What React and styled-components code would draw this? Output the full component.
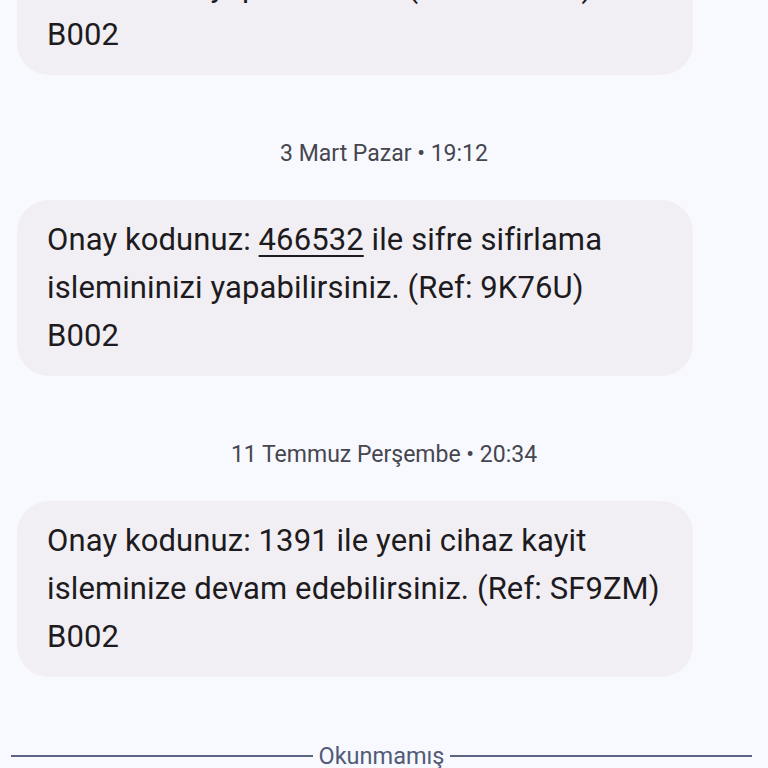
import React from 'react';
import styled, { createGlobalStyle } from 'styled-components';

const GlobalStyle = createGlobalStyle`
  html, body {
    margin: 0;
    padding: 0;
    background: #f8f9fe;
  }
  body {
    font-family: Roboto, "Noto Sans", sans-serif;
    overflow: hidden;
  }
`

const Screen = styled.div`
  width: 768px;
  height: 768px;
  overflow: hidden;
  background: #f8f9fe;
`

const Thread = styled.div`
  display: flex;
  flex-direction: column;
  margin-top: -101px;
`

const Bubble = styled.div`
  box-sizing: border-box;
  width: 676px;
  margin-left: 17px;
  padding: 16px 30px;
  background: #f1eff4;
  border-radius: 32px;
  color: #1d1b20;
  font-size: 31px;
  line-height: 48px;
  letter-spacing: 0.1px;
`

const Code = styled.span`
  text-decoration: underline;
  text-decoration-thickness: 2px;
  text-underline-offset: 5px;
`

const DateLabel = styled.div`
  margin: 65px 0 32px;
  text-align: center;
  font-size: 23px;
  line-height: 28px;
  color: #46464f;
`

const Divider = styled.div`
  display: flex;
  align-items: center;
  gap: 6px;
  margin: 65px 16px 0 11px;
  font-size: 23.5px;
  line-height: 28px;
  color: #515b78;
  &::before, &::after {
    content: '';
    flex: 1;
    height: 2px;
    background: #5b6482;
  }
`

const messages = [
  {
    date: null,
    lines: [
      <>Onay kodunuz: <Code>281947</Code> ile sifre sifirlama</>,
      'islemininizi yapabilirsiniz. (Ref: 4XM8K)',
      'B002',
    ],
  },
  {
    date: '3 Mart Pazar • 19:12',
    lines: [
      <>Onay kodunuz: <Code>466532</Code> ile sifre sifirlama</>,
      'islemininizi yapabilirsiniz. (Ref: 9K76U)',
      'B002',
    ],
  },
  {
    date: '11 Temmuz Perşembe • 20:34',
    lines: [
      'Onay kodunuz: 1391 ile yeni cihaz kayit',
      'isleminize devam edebilirsiniz. (Ref: SF9ZM)',
      'B002',
    ],
  },
]

export default function App() {
  return (
    <Screen>
      <GlobalStyle />
      <Thread>
        {messages.map((m, i) => (
          <React.Fragment key={i}>
            {m.date && <DateLabel>{m.date}</DateLabel>}
            <Bubble>
              {m.lines.map((l, j) => (
                <div key={j}>{l}</div>
              ))}
            </Bubble>
          </React.Fragment>
        ))}
        <Divider>Okunmamış</Divider>
      </Thread>
    </Screen>
  )
}
